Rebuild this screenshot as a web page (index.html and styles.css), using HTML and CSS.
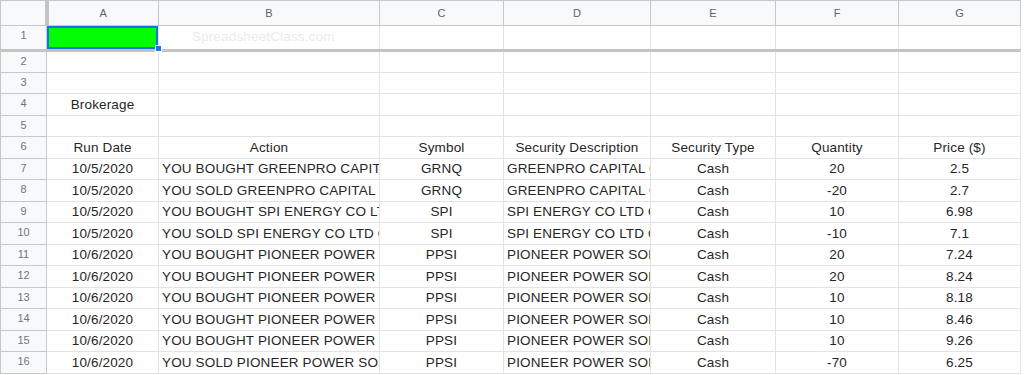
FILE: index.html
```html
<!DOCTYPE html>
<html>

<head>
    <meta charset="utf-8">
    <title>Brokerage</title>
    <link rel="stylesheet" href="styles.css">
</head>

<body>
    <table class="sheet">
        <colgroup>
            <col style="width:46px">
            <col style="width:112px">
            <col style="width:221px">
            <col style="width:124px">
            <col style="width:147px">
            <col style="width:125px">
            <col style="width:123px">
            <col style="width:122px">
        </colgroup>
        <tr class="col-head">
            <th class="corner"></th>
            <th>A</th>
            <th>B</th>
            <th>C</th>
            <th>D</th>
            <th>E</th>
            <th>F</th>
            <th>G</th>
        </tr>
        <tr class="frozen">
            <th class="row-head">1</th>
            <td class="selected"><span class="handle"></span></td>
            <td class="mark">SpreadsheetClass.com</td>
            <td></td><td></td><td></td><td></td><td></td>
        </tr>
        <tr>
            <th class="row-head">2</th>
            <td></td><td></td><td></td><td></td><td></td><td></td><td></td>
        </tr>
        <tr>
            <th class="row-head">3</th>
            <td></td><td></td><td></td><td></td><td></td><td></td><td></td>
        </tr>
        <tr>
            <th class="row-head">4</th>
            <td class="c">Brokerage</td><td></td><td></td><td></td><td></td><td></td><td></td>
        </tr>
        <tr>
            <th class="row-head">5</th>
            <td></td><td></td><td></td><td></td><td></td><td></td><td></td>
        </tr>
        <tr>
            <th class="row-head">6</th>
            <td class="c">Run Date</td>
            <td class="c">Action</td>
            <td class="c">Symbol</td>
            <td class="c">Security Description</td>
            <td class="c">Security Type</td>
            <td class="c">Quantity</td>
            <td class="c">Price ($)</td>
        </tr>
        <tr>
            <th class="row-head">7</th>
            <td class="c">10/5/2020</td>
            <td>YOU BOUGHT GREENPRO CAPITAL CORP</td>
            <td class="c">GRNQ</td>
            <td>GREENPRO CAPITAL CORP</td>
            <td class="c">Cash</td>
            <td class="c">20</td>
            <td class="c">2.5</td>
        </tr>
        <tr>
            <th class="row-head">8</th>
            <td class="c">10/5/2020</td>
            <td>YOU SOLD GREENPRO CAPITAL CORP</td>
            <td class="c">GRNQ</td>
            <td>GREENPRO CAPITAL CORP</td>
            <td class="c">Cash</td>
            <td class="c">-20</td>
            <td class="c">2.7</td>
        </tr>
        <tr>
            <th class="row-head">9</th>
            <td class="c">10/5/2020</td>
            <td>YOU BOUGHT SPI ENERGY CO LTD ORD</td>
            <td class="c">SPI</td>
            <td>SPI ENERGY CO LTD ORD</td>
            <td class="c">Cash</td>
            <td class="c">10</td>
            <td class="c">6.98</td>
        </tr>
        <tr>
            <th class="row-head">10</th>
            <td class="c">10/5/2020</td>
            <td>YOU SOLD SPI ENERGY CO LTD ORD</td>
            <td class="c">SPI</td>
            <td>SPI ENERGY CO LTD ORD</td>
            <td class="c">Cash</td>
            <td class="c">-10</td>
            <td class="c">7.1</td>
        </tr>
        <tr>
            <th class="row-head">11</th>
            <td class="c">10/6/2020</td>
            <td>YOU BOUGHT PIONEER POWER SOLUTIONS</td>
            <td class="c">PPSI</td>
            <td>PIONEER POWER SOLUTIONS</td>
            <td class="c">Cash</td>
            <td class="c">20</td>
            <td class="c">7.24</td>
        </tr>
        <tr>
            <th class="row-head">12</th>
            <td class="c">10/6/2020</td>
            <td>YOU BOUGHT PIONEER POWER SOLUTIONS</td>
            <td class="c">PPSI</td>
            <td>PIONEER POWER SOLUTIONS</td>
            <td class="c">Cash</td>
            <td class="c">20</td>
            <td class="c">8.24</td>
        </tr>
        <tr>
            <th class="row-head">13</th>
            <td class="c">10/6/2020</td>
            <td>YOU BOUGHT PIONEER POWER SOLUTIONS</td>
            <td class="c">PPSI</td>
            <td>PIONEER POWER SOLUTIONS</td>
            <td class="c">Cash</td>
            <td class="c">10</td>
            <td class="c">8.18</td>
        </tr>
        <tr>
            <th class="row-head">14</th>
            <td class="c">10/6/2020</td>
            <td>YOU BOUGHT PIONEER POWER SOLUTIONS</td>
            <td class="c">PPSI</td>
            <td>PIONEER POWER SOLUTIONS</td>
            <td class="c">Cash</td>
            <td class="c">10</td>
            <td class="c">8.46</td>
        </tr>
        <tr>
            <th class="row-head">15</th>
            <td class="c">10/6/2020</td>
            <td>YOU BOUGHT PIONEER POWER SOLUTIONS</td>
            <td class="c">PPSI</td>
            <td>PIONEER POWER SOLUTIONS</td>
            <td class="c">Cash</td>
            <td class="c">10</td>
            <td class="c">9.26</td>
        </tr>
        <tr>
            <th class="row-head">16</th>
            <td class="c">10/6/2020</td>
            <td>YOU SOLD PIONEER POWER SOLUTIONS</td>
            <td class="c">PPSI</td>
            <td>PIONEER POWER SOLUTIONS</td>
            <td class="c">Cash</td>
            <td class="c">-70</td>
            <td class="c">6.25</td>
        </tr>
    </table>
</body>

</html>
```

FILE: styles.css
```css
* {
    box-sizing: border-box;
    margin: 0;
    padding: 0;
}

body {
    background-color: #fff;
    font-family: "Liberation Sans", Arial, sans-serif;
    overflow: hidden;
}

.sheet {
    border-collapse: collapse;
    table-layout: fixed;
    width: 1020px;
}

.sheet th,
.sheet td {
    border: 1px solid #e2e3e3;
    height: 21.5px;
    overflow: hidden;
    white-space: nowrap;
}

.sheet td {
    color: #262626;
    font-size: 13.5px;
    letter-spacing: 0.15px;
    padding: 0 3px;
    text-align: left;
}

.sheet td.c {
    text-align: center;
}

.col-head th {
    background-color: #f8f9fa;
    border-color: #c8c8c8;
    color: #5f6368;
    font-size: 11px;
    font-weight: normal;
    height: 25px;
}

.col-head th.corner {
    border-right: 4px solid #c4c4c4;
}

.row-head {
    background-color: #f8f9fa;
    border-color: #c8c8c8 !important;
    color: #70757a;
    font-size: 11px;
    font-weight: normal;
    padding-bottom: 2px;
    text-align: center;
}

.frozen th,
.frozen td {
    border-bottom: 3px solid #c4c4c4 !important;
    height: 25px;
}

.frozen th.row-head {
    padding-bottom: 5px;
}

.sheet td.selected {
    background-color: #00ff00;
    box-shadow: inset 0 0 0 2px #1a73e8;
    position: relative;
    overflow: visible;
}

.handle {
    background-color: #1a73e8;
    border: 1px solid #fff;
    height: 7px;
    position: absolute;
    right: -4px;
    bottom: -3px;
    width: 7px;
}

.sheet td.mark {
    color: #ebebeb;
    padding-bottom: 3px;
    padding-left: 33px;
}
```
